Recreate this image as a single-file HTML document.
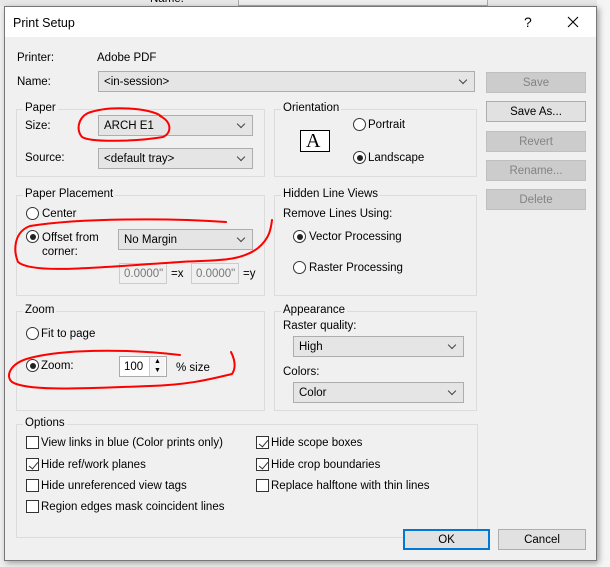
<!DOCTYPE html>
<html><head><style>
*{box-sizing:border-box;margin:0;padding:0}
body{width:610px;height:567px;background:#f0f0f0;position:relative;overflow:hidden;font-family:"Liberation Sans",sans-serif;font-size:11.5px;color:#000}
.a{position:absolute;white-space:nowrap}
.dlg{position:absolute;left:4px;top:6px;width:593px;height:555px;background:#f0f0f0;border:1px solid #777;box-shadow:2px 2px 6px rgba(0,0,0,.35)}
.title{position:absolute;left:0;top:0;width:100%;height:30px;background:#fff}
.grp{position:absolute;border:1px solid #dcdcdc}
.gl{position:absolute;top:-8px;left:6px;background:#f0f0f0;padding:0 2px}
.dd{position:absolute;background:#e5e5e5;border:1px solid #adadad;height:21px;padding:4px 5px 2px}
.dd:after{content:"";position:absolute;right:8px;top:5px;width:5px;height:5px;border-right:1px solid #444;border-bottom:1px solid #444;transform:rotate(45deg)}
.btn{position:absolute;background:#cccccc;border:1px solid #bfbfbf;color:#838383;text-align:center;height:21px;line-height:21px;width:100px}
.btn.e{background:#e1e1e1;border-color:#adadad;color:#000}
.r{position:absolute;width:13px;height:13px;border:1px solid #333;border-radius:50%;background:#fff}
.r.on:after{content:"";position:absolute;left:2.5px;top:2.5px;width:6px;height:6px;border-radius:50%;background:#222}
.cb{position:absolute;width:13px;height:13px;border:1px solid #333;background:#fff}
.cb.on:after{content:"";position:absolute;left:3.5px;top:0.5px;width:4px;height:8px;border-right:1.3px solid #333;border-bottom:1.3px solid #333;transform:rotate(40deg)}
.tb{position:absolute;border:1px solid #ccc;background:#f0f0f0;color:#777;height:21px;padding:4px 4px 2px}
</style></head><body>
<div class="a" style="left:0;top:0;width:610px;height:6px;background:#e8e8e8"></div>
<div class="a" style="left:150px;top:-7px;color:#000">Name:</div>
<div class="a" style="left:238px;top:0;width:250px;height:6px;border:1px solid #aaa;border-top:0;background:#eee"></div>
<div class="a" style="left:597px;top:0;width:13px;height:567px;background:#f5f5f5"></div>
<div class="dlg">
<div class="title"></div>
<div class="a" style="left:8px;top:9px;font-size:12.5px">Print Setup</div>
<div class="a" style="left:519px;top:7px;font-size:14px">?</div>
<svg class="a" style="left:562px;top:9px" width="12" height="12"><path d="M1 1L11 11M11 1L1 11" stroke="#000" stroke-width="1.1"/></svg>
</div>
<div class="a" style="left:17px;top:52px">Printer:</div>
<div class="a" style="left:97px;top:52px">Adobe PDF</div>
<div class="a" style="left:17px;top:76px">Name:</div>
<div class="dd" style="left:98px;top:71px;width:377px">&lt;in-session&gt;</div>
<div class="btn" style="left:486px;top:72px">Save</div>
<div class="btn e" style="left:486px;top:101px">Save As...</div>
<div class="btn" style="left:486px;top:131px">Revert</div>
<div class="btn" style="left:486px;top:160px">Rename...</div>
<div class="btn" style="left:486px;top:189px">Delete</div>

<div class="grp" style="left:16px;top:109px;width:249px;height:68px"><span class="gl">Paper</span></div>
<div class="a" style="left:25px;top:120px">Size:</div>
<div class="dd" style="left:98px;top:115px;width:155px">ARCH E1</div>
<div class="a" style="left:25px;top:152px">Source:</div>
<div class="dd" style="left:98px;top:148px;width:155px">&lt;default tray&gt;</div>

<div class="grp" style="left:274px;top:109px;width:203px;height:68px"><span class="gl">Orientation</span></div>
<div class="a" style="left:300px;top:130px;width:30px;height:22px;border:1px solid #000;background:#fff;font-family:'Liberation Serif',serif;font-size:20px;line-height:20px;padding-left:5px">A</div>
<div class="r" style="left:353px;top:118px"></div><div class="a" style="left:368px;top:119px">Portrait</div>
<div class="r on" style="left:353px;top:151px"></div><div class="a" style="left:368px;top:152px">Landscape</div>

<div class="grp" style="left:16px;top:195px;width:249px;height:101px"><span class="gl">Paper Placement</span></div>
<div class="r" style="left:26px;top:207px"></div><div class="a" style="left:42px;top:208px">Center</div>
<div class="r on" style="left:26px;top:230px"></div><div class="a" style="left:42px;top:231px;line-height:14px">Offset from<br>corner:</div>
<div class="dd" style="left:118px;top:229px;width:135px">No Margin</div>
<div class="tb" style="left:119px;top:263px;width:48px">0.0000"</div><div class="a" style="left:171px;top:268px">=x</div>
<div class="tb" style="left:191px;top:263px;width:48px">0.0000"</div><div class="a" style="left:243px;top:268px">=y</div>

<div class="grp" style="left:274px;top:195px;width:203px;height:101px"><span class="gl">Hidden Line Views</span></div>
<div class="a" style="left:283px;top:208px">Remove Lines Using:</div>
<div class="r on" style="left:293px;top:230px"></div><div class="a" style="left:309px;top:231px">Vector Processing</div>
<div class="r" style="left:293px;top:261px"></div><div class="a" style="left:309px;top:262px">Raster Processing</div>

<div class="grp" style="left:16px;top:311px;width:249px;height:100px"><span class="gl">Zoom</span></div>
<div class="r" style="left:26px;top:327px"></div><div class="a" style="left:41px;top:328px">Fit to page</div>
<div class="r on" style="left:26px;top:359px"></div><div class="a" style="left:41px;top:360px">Zoom:</div>
<div class="a" style="left:119px;top:356px;width:48px;height:21px;border:1px solid #aaa;background:#fff;padding:4px 4px 2px">100</div>
<div class="a" style="left:149px;top:357px;width:16px;height:19px;border-left:1px solid #ccc;font-size:7px;line-height:9px;text-align:center;background:#f5f5f5">▲<br>▼</div>
<div class="a" style="left:176px;top:362px">% size</div>

<div class="grp" style="left:274px;top:311px;width:203px;height:100px"><span class="gl">Appearance</span></div>
<div class="a" style="left:283px;top:320px">Raster quality:</div>
<div class="dd" style="left:293px;top:336px;width:171px">High</div>
<div class="a" style="left:283px;top:366px">Colors:</div>
<div class="dd" style="left:293px;top:382px;width:171px">Color</div>

<div class="grp" style="left:16px;top:424px;width:462px;height:114px"><span class="gl">Options</span></div>
<div class="cb" style="left:26px;top:436px"></div><div class="a" style="left:41px;top:437px">View links in blue (Color prints only)</div>
<div class="cb on" style="left:26px;top:458px"></div><div class="a" style="left:41px;top:459px">Hide ref/work planes</div>
<div class="cb" style="left:26px;top:479px"></div><div class="a" style="left:41px;top:480px">Hide unreferenced view tags</div>
<div class="cb" style="left:26px;top:500px"></div><div class="a" style="left:41px;top:501px">Region edges mask coincident lines</div>
<div class="cb on" style="left:256px;top:436px"></div><div class="a" style="left:271px;top:437px">Hide scope boxes</div>
<div class="cb on" style="left:256px;top:458px"></div><div class="a" style="left:271px;top:459px">Hide crop boundaries</div>
<div class="cb" style="left:256px;top:479px"></div><div class="a" style="left:271px;top:480px">Replace halftone with thin lines</div>

<div class="btn e" style="left:403px;top:529px;width:87px;border:2px solid #0078d7;line-height:19px">OK</div>
<div class="btn e" style="left:498px;top:529px;width:88px">Cancel</div>

<svg class="a" style="left:0;top:0" width="610" height="567"><g fill="none" stroke="#f00" stroke-width="2" stroke-linecap="round">
<path d="M161 116C150 108 110 105 88 113C78 118 76 130 82 137C92 143 140 141 163 137C172 133 172 122 160 116"/>
<path d="M226 222C170 218 80 218 30 226C14 232 13 250 18 262C32 274 90 268 180 262C215 260 240 262 258 248C270 238 271 228 272 220"/>
<path d="M180 355C120 348 60 350 30 358C10 363 5 376 12 382C28 392 90 388 150 386C190 385 215 378 232 374C236 368 235 360 231 352"/>
</g></svg>
</body></html>
